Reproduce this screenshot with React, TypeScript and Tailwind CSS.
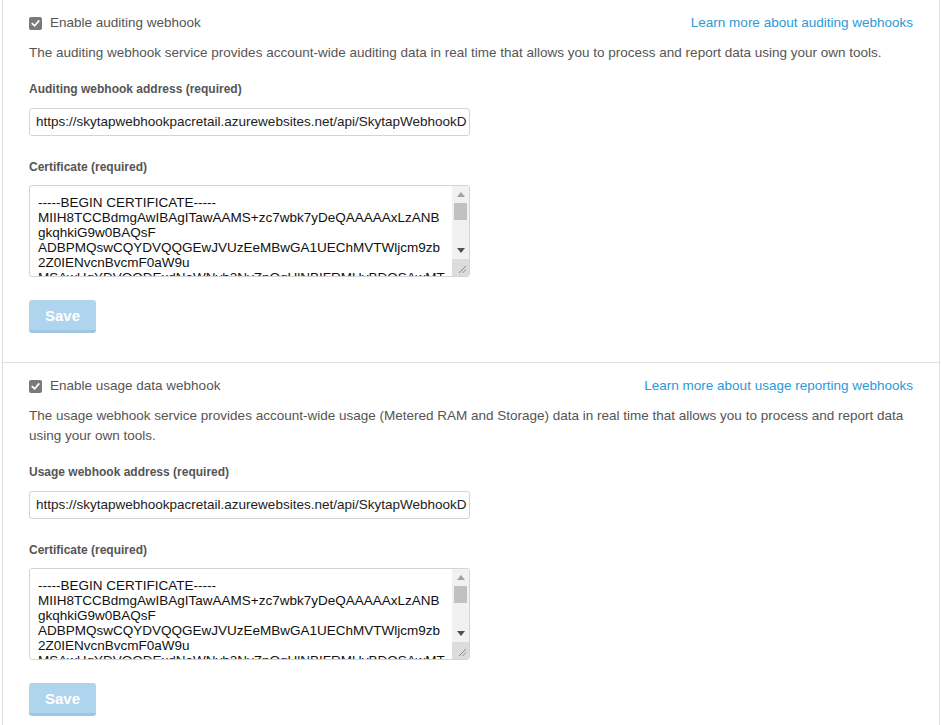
import React from "react";

const CERT_LINES = [
  "-----BEGIN CERTIFICATE-----",
  "MIIH8TCCBdmgAwIBAgITawAAMS+zc7wbk7yDeQAAAAAxLzANB",
  "gkqhkiG9w0BAQsF",
  "ADBPMQswCQYDVQQGEwJVUzEeMBwGA1UEChMVTWljcm9zb",
  "2Z0IENvcnBvcmF0aW9u",
  "MSAwHgYDVQQDExdNaWNyb3NvZnQgUlNBIFRMUyBDQSAwMT",
];

function Checkbox() {
  return (
    <span className="flex h-[13px] w-[13px] items-center justify-center rounded-[2px] bg-[#7a7a7a]">
      <svg width="9" height="9" viewBox="0 0 10 10">
        <path d="M1.5 5.2 L4 7.6 L8.6 2.3" fill="none" stroke="#fff" strokeWidth="1.9" strokeLinecap="square" />
      </svg>
    </span>
  );
}

function CertBox() {
  return (
    <div className="mt-[9px] flex h-[92px] w-[441px] overflow-hidden rounded-[3px] border border-[#d4d4d4] bg-white">
      <div className="flex-1 overflow-hidden pl-[8px] pt-[9px] text-[13.5px] leading-[15px] text-[#111]">
        {CERT_LINES.map((l, i) => (
          <div key={i} className="whitespace-nowrap">
            {l}
          </div>
        ))}
      </div>
      <div className="flex w-[17px] flex-col bg-[#f1f1f1]">
        <div className="flex h-[17px] items-center justify-center">
          <svg width="8" height="5" viewBox="0 0 8 5">
            <path d="M0 5 L4 0 L8 5 Z" fill="#a3a3a3" />
          </svg>
        </div>
        <div className="mx-[2px] h-[17px] bg-[#c1c1c1]" />
        <div className="flex-1" />
        <div className="flex h-[17px] items-center justify-center">
          <svg width="8" height="5" viewBox="0 0 8 5">
            <path d="M0 0 L8 0 L4 5 Z" fill="#505050" />
          </svg>
        </div>
        <div className="flex h-[17px] items-end justify-end bg-[#dcdcdc] pb-[2px] pr-[2px]">
          <svg width="9" height="9" viewBox="0 0 9 9">
            <path d="M1 8 L8 1 M4.5 8 L8 4.5" stroke="#8a8a8a" strokeWidth="1" />
          </svg>
        </div>
      </div>
    </div>
  );
}

function Section({
  enableLabel,
  link,
  description,
  addressLabel,
  last,
}: {
  enableLabel: string;
  link: string;
  description: React.ReactNode;
  addressLabel: string;
  last?: boolean;
}) {
  return (
    <section className={`px-[26px] pt-[13px] ${last ? "pb-[9px]" : "border-b border-[#dedede] pb-[29px]"}`}>
      <div className="flex h-[20px] items-center justify-between">
        <label className="flex items-center gap-[8px] text-[13.5px] text-[#555]">
          <Checkbox />
          <span>{enableLabel}</span>
        </label>
        <a className="text-[13.5px] text-[#2b9ad8]">{link}</a>
      </div>
      <p className="mt-[10px] text-[13.5px] leading-[20px] text-[#555]">{description}</p>
      <div className="mt-[18px] h-[17px] text-[12px] font-bold leading-[17px] text-[#555]">{addressLabel}</div>
      <div className="mt-[10px] flex h-[28px] w-[441px] items-center overflow-hidden rounded-[3px] border border-[#d4d4d4] bg-white pl-[6px] text-[13.5px] text-[#222]">
        <span className="whitespace-nowrap">https://skytapwebhookpacretail.azurewebsites.net/api/SkytapWebhookD</span>
      </div>
      <div className="mt-[23px] h-[17px] text-[12px] font-bold leading-[17px] text-[#555]">Certificate (required)</div>
      <CertBox />
      <button className="mt-[23px] flex h-[33px] w-[67px] items-center justify-center rounded-[3px] border-b-[3px] border-[#9ec6e3] bg-[#aed4ee] pt-[3px] text-[15px] font-semibold text-white">
        Save
      </button>
    </section>
  );
}

export default function App() {
  return (
    <div className="min-h-[725px] bg-white pl-[2px] pr-[1px]" style={{ fontFamily: '"Liberation Sans", Arial, sans-serif' }}>
      <div className="h-[725px] overflow-hidden border-x border-[#dedede]">
        <Section
          enableLabel="Enable auditing webhook"
          link="Learn more about auditing webhooks"
          description="The auditing webhook service provides account-wide auditing data in real time that allows you to process and report data using your own tools."
          addressLabel="Auditing webhook address (required)"
        />
        <Section
          enableLabel="Enable usage data webhook"
          link="Learn more about usage reporting webhooks"
          description={
            <>
              The usage webhook service provides account-wide usage (Metered RAM and Storage) data in real time that allows you to process and report data
              <br />
              using your own tools.
            </>
          }
          addressLabel="Usage webhook address (required)"
          last
        />
      </div>
    </div>
  );
}
